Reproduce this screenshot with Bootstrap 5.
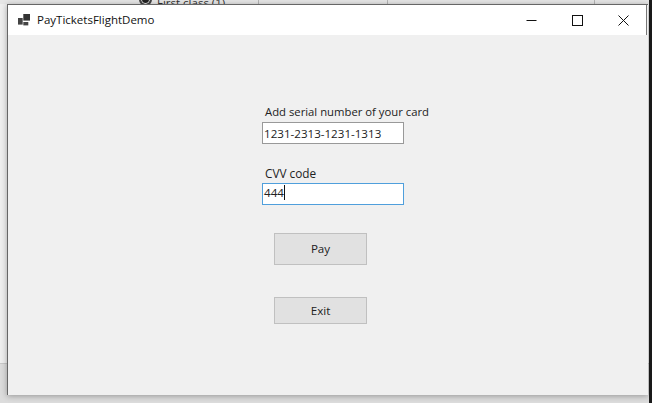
<!DOCTYPE html>
<html lang="en">
<head>
<meta charset="utf-8">
<title>PayTicketsFlightDemo</title>
<link rel="stylesheet" href="https://cdn.jsdelivr.net/npm/bootstrap@5.3.0/dist/css/bootstrap.min.css">
<style>
html,body{width:652px;height:403px;overflow:hidden;margin:0}
body{background:#efefef;font-family:"Open Sans","Noto Sans","Liberation Sans",sans-serif;position:relative}
.backdrop-top{height:4px;background:#e6e6e6;font-size:11.5px;color:#333;overflow:hidden;position:absolute;left:0;right:0;top:0}
.backdrop-radio{position:absolute;left:139px;top:-7px;width:13px;height:13px;border-radius:50%;border:2px solid #444;background:#222;box-shadow:inset 0 0 0 1px #eee}
.backdrop-text{position:absolute;left:157px;top:-4px;white-space:nowrap;line-height:14px}
.backdrop-rule{position:absolute;top:0;height:4px;width:1px;background:#b5b5b5}
.rule-a{left:258px}.rule-b{left:387px}.rule-c{left:594px}
.backdrop-bottom{position:absolute;left:0;right:0;top:363px;bottom:0;background:#dcdcdc;border-top:1px solid #c8c8c8}
.right-edge{position:absolute;left:649px;top:0;bottom:0;width:3px;background:#1b1b1b}
.app-window{position:absolute;left:7px;top:4px;width:641px;height:391px;background:#f0f0f0;box-shadow:0 1px 6px rgba(0,0,0,.32);border-left:1px solid #666;border-top:1px solid #666}
.title-bar{height:30px;background:#fff;padding-left:10px;margin-right:1px;border-right:1px solid #777}
.app-title{font-size:11.5px;color:#111;margin-left:7px;padding-bottom:1px}
.win-btn{width:46px;height:30px}
.form-area{width:170px;margin-left:254px;padding-top:69px}
.field-label{line-height:16px;color:#222;margin:0 0 2px 3px;white-space:nowrap}
.label-long{font-size:11.3px}
.label-short{font-size:11.8px}
.field-box{display:block;width:142px;height:22px;border:1px solid #999;border-radius:0;background:#fff;font-size:11.6px;line-height:18px;padding:0 1px;color:#222;box-shadow:none}
.field-box:focus{box-shadow:none;outline:0;border-color:#999}
.field-active{border-color:#4f9fdc}
.caret-mark{display:inline-block;width:1px;height:15px;background:#111;vertical-align:-3px}
.gap-one{height:21px}
.win-action{display:block;width:93px;background:#e1e1e1;border:1px solid #c0c0c0;border-radius:0;font-size:11.6px;color:#222;padding:0;margin-left:12px}
.action-pay{height:32px;margin-top:28px}
.action-exit{height:27px;margin-top:32px}
</style>
</head>
<body>
<div class="backdrop-top"><span class="backdrop-radio"></span><span class="backdrop-text">First class (1)</span><span class="backdrop-rule rule-a"></span><span class="backdrop-rule rule-b"></span><span class="backdrop-rule rule-c"></span></div>
<div class="backdrop-bottom"></div>
<div class="right-edge"></div>
<div class="app-window">
  <div class="title-bar d-flex align-items-center">
    <svg width="12" height="12" viewBox="0 0 12 12"><rect x="0" y="4" width="4.7" height="6.6" fill="#444"/><rect x="5.3" y="0" width="6.7" height="6.6" fill="#333"/><rect x="5.3" y="8" width="5" height="3.4" fill="#444"/></svg>
    <span class="app-title">PayTicketsFlightDemo</span>
    <div class="ms-auto d-flex">
      <div class="win-btn d-flex align-items-center justify-content-center"><svg width="11" height="11" viewBox="0 0 11 11"><path d="M0.5 5.5h10" stroke="#111" fill="none"/></svg></div>
      <div class="win-btn d-flex align-items-center justify-content-center"><svg width="11" height="11" viewBox="0 0 11 11"><rect x=".5" y=".5" width="10" height="10" stroke="#111" fill="none"/></svg></div>
      <div class="win-btn d-flex align-items-center justify-content-center"><svg width="11" height="11" viewBox="0 0 11 11"><path d="M.5.5l10 10M10.5.5l-10 10" stroke="#111" fill="none"/></svg></div>
    </div>
  </div>
  <div class="form-area">
    <label class="field-label label-long d-block" for="serial">Add serial number of your card</label>
    <input id="serial" class="form-control field-box" value="1231-2313-1231-1313">
    <div class="gap-one"></div>
    <label class="field-label label-short d-block">CVV code</label>
    <div class="field-box field-active">444<span class="caret-mark"></span></div>
    <button class="btn win-action action-pay">Pay</button>
    <button class="btn win-action action-exit">Exit</button>
  </div>
</div>
<script src="https://cdn.jsdelivr.net/npm/bootstrap@5.3.0/dist/js/bootstrap.bundle.min.js"></script>
</body>
</html>
